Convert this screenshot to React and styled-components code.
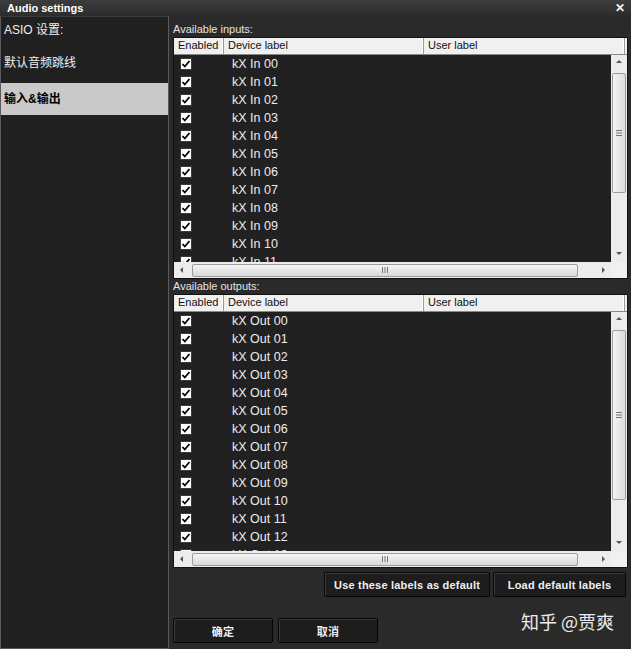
import React from "react"
import styled, { createGlobalStyle } from "styled-components"

const GlobalStyle = createGlobalStyle`
  html, body { margin: 0; padding: 0; background: #2a2a2a; }
  body { font-family: "Liberation Sans", Arial, "Noto Sans CJK SC", sans-serif; }
`

const Window = styled.div`
  width: 631px;
  height: 649px;
  display: flex;
  flex-direction: column;
  background: #2a2a2a;
  overflow: hidden;
`

const TitleBar = styled.div`
  height: 16px;
  flex: none;
  display: flex;
  align-items: center;
  justify-content: space-between;
  padding: 0 6px 0 7px;
  background: linear-gradient(#3d3d3d, #2c2c2c);
  color: #fff;
  font-size: 11px;
  font-weight: bold;
`

const Close = styled.span`
  font-size: 12px;
  font-weight: bold;
  color: #f2f2f2;
`

const Body = styled.div`
  flex: 1;
  display: flex;
  min-height: 0;
`

const Sidebar = styled.div`
  width: 167px;
  flex: none;
  background: #202020;
  border-left: 1px solid #5a5a5a;
  border-right: 1px solid #5a5a5a;
  border-bottom: 1px solid #5a5a5a;
  border-top: 1px solid #3a3a3a;
  display: flex;
  flex-direction: column;
  padding-top: 5px;
`

const NavItem = styled.div`
  height: ${(p) => (p.$active ? 32 : 33)}px;
  margin-top: ${(p) => (p.$active ? -5 : 0)}px;
  padding: 0 3px;
  display: flex;
  align-items: ${(p) => (p.$active ? "center" : "flex-start")};
  line-height: 16px;
  font-family: "Liberation Sans", "Noto Sans CJK SC", sans-serif;
  font-size: 12px;
  font-weight: ${(p) => (p.$active ? "bold" : "normal")};
  color: ${(p) => (p.$active ? "#000" : "#eee")};
  background: ${(p) => (p.$active ? "#c9c9c9" : "transparent")};
`

const Main = styled.div`
  flex: 1;
  display: flex;
  flex-direction: column;
  padding: 6px 5px 0 4px;
`

const SectionLabel = styled.div`
  font-size: 11px;
  color: #e4e4e4;
  height: 14px;
  line-height: 14px;
  margin-bottom: 1px;
`

const Table = styled.div`
  width: 453px;
  display: flex;
  flex-direction: column;
  border: 1px solid #111;
  background: #f0f0f0;
`

const HeaderRow = styled.div`
  display: flex;
  height: 16px;
  background: #f0f0f0;
  border-bottom: 1px solid #888;
`

const HeaderCell = styled.div`
  width: ${(p) => p.$w}px;
  flex: none;
  font-size: 11px;
  line-height: 15px;
  color: #111;
  padding-left: 4px;
  box-sizing: border-box;
  border-right: 1px solid #9a9a9a;
  box-shadow: inset -1px 0 0 #fff;
`

const ListArea = styled.div`
  display: flex;
  height: ${(p) => p.$h}px;
`

const List = styled.div`
  flex: 1;
  background: #212121;
  overflow: hidden;
`

const Row = styled.div`
  height: 18px;
  display: flex;
  align-items: center;
`

const CheckCell = styled.div`
  width: 52px;
  padding-left: 6px;
  display: flex;
  align-items: center;
`

const DeviceText = styled.div`
  font-size: 12.5px;
  color: #ececec;
`

const VScroll = styled.div`
  width: 16px;
  flex: none;
  background: #ececec;
  display: flex;
  flex-direction: column;
  align-items: center;
`

const Arrow = styled.div`
  width: 16px;
  height: 16px;
  flex: none;
  display: flex;
  align-items: center;
  justify-content: center;
`

const VThumbWrap = styled.div`
  flex: 1;
  width: 16px;
  display: flex;
  flex-direction: column;
  padding-top: 2px;
`

const VThumb = styled.div`
  height: ${(p) => p.$h}px;
  margin: 0 1px;
  border: 1px solid #9c9c9c;
  border-radius: 2px;
  background: linear-gradient(90deg, #f4f4f4, #dcdcdc);
  display: flex;
  align-items: center;
  justify-content: center;
`

const HScroll = styled.div`
  height: 16px;
  display: flex;
  background: #ececec;
`

const HTrack = styled.div`
  flex: 1;
  display: flex;
  align-items: center;
`

const HThumb = styled.div`
  height: 13px;
  width: 386px;
  margin-left: 2px;
  border: 1px solid #9c9c9c;
  border-radius: 2px;
  background: linear-gradient(#f6f6f6, #d8d8d8);
  display: flex;
  align-items: center;
  justify-content: center;
  box-sizing: border-box;
`

const Corner = styled.div`
  width: 16px;
  background: #f0f0f0;
`

const Spacer = styled.div`
  height: ${(p) => p.$h}px;
  flex: none;
`

const ButtonRow = styled.div`
  display: flex;
  justify-content: ${(p) => p.$justify || "flex-start"};
  align-items: center;
  gap: ${(p) => p.$gap || 3}px;
  padding-right: ${(p) => p.$pr || 0}px;
`

const Button = styled.button`
  width: ${(p) => p.$w}px;
  height: 25px;
  background: #1d1d1d;
  border: 1px solid #050505;
  border-radius: 2px;
  box-shadow: inset 1px 1px 0 #3c3c3c;
  color: #f0f0f0;
  font-family: "Liberation Sans", "Noto Sans CJK SC", sans-serif;
  font-size: 11px;
  font-weight: bold;
  letter-spacing: 0.2px;
  padding: 0;
`

const BottomBar = styled.div`
  display: flex;
  align-items: center;
  justify-content: space-between;
  padding-right: 14px;
`

const Watermark = styled.div`
  font-family: "Noto Sans CJK SC", sans-serif;
  font-size: 18px;
  color: #ececec;
  margin-top: -20px;
`

const Check = () => (
  <svg width="12" height="12" viewBox="0 0 12 12">
    <rect x="0.5" y="0.5" width="11" height="11" fill="#fff" stroke="#3a3a3a" />
    <path d="M2.5 6 L4.8 8.5 L9.5 3" fill="none" stroke="#000" strokeWidth="1.8" />
  </svg>
)

const Tri = ({ dir }) => {
  const pts = {
    up: "4,7 7,4 10,7",
    down: "4,5 7,8 10,5",
    left: "8,4 5,7 8,10",
    right: "6,4 9,7 6,10",
  }[dir]
  return (
    <svg width="14" height="14" viewBox="0 0 14 14">
      <polygon points={pts} fill="#555" />
    </svg>
  )
}

const Grip = ({ vertical }) =>
  vertical ? (
    <svg width="8" height="8" viewBox="0 0 8 8">
      <path d="M1 1.5H7M1 4H7M1 6.5H7" stroke="#777" strokeWidth="1" />
    </svg>
  ) : (
    <svg width="8" height="8" viewBox="0 0 8 8">
      <path d="M1.5 1V7M4 1V7M6.5 1V7" stroke="#777" strokeWidth="1" />
    </svg>
  )

const DeviceTable = ({ names, listHeight, thumbHeight }) => (
  <Table>
    <HeaderRow>
      <HeaderCell $w={50}>Enabled</HeaderCell>
      <HeaderCell $w={200}>Device label</HeaderCell>
      <HeaderCell $w={201}>User label</HeaderCell>
    </HeaderRow>
    <ListArea $h={listHeight}>
      <List>
        {names.map((n) => (
          <Row key={n}>
            <CheckCell>
              <Check />
            </CheckCell>
            <DeviceText>{n}</DeviceText>
          </Row>
        ))}
      </List>
      <VScroll>
        <Arrow>
          <Tri dir="up" />
        </Arrow>
        <VThumbWrap>
          <VThumb $h={thumbHeight}>
            <Grip vertical />
          </VThumb>
        </VThumbWrap>
        <Arrow>
          <Tri dir="down" />
        </Arrow>
      </VScroll>
    </ListArea>
    <HScroll>
      <Arrow>
        <Tri dir="left" />
      </Arrow>
      <HTrack>
        <HThumb>
          <Grip />
        </HThumb>
      </HTrack>
      <Arrow>
        <Tri dir="right" />
      </Arrow>
      <Corner />
    </HScroll>
  </Table>
)

const pad = (i) => String(i).padStart(2, "0")
const inputs = Array.from({ length: 12 }, (_, i) => `kX In ${pad(i)}`)
const outputs = Array.from({ length: 14 }, (_, i) => `kX Out ${pad(i)}`)

export default function App() {
  return (
    <Window>
      <GlobalStyle />
      <TitleBar>
        <span>Audio settings</span>
        <Close>✕</Close>
      </TitleBar>
      <Body>
        <Sidebar>
          <NavItem>ASIO 设置:</NavItem>
          <NavItem>默认音频跳线</NavItem>
          <NavItem $active>输入&amp;输出</NavItem>
        </Sidebar>
        <Main>
          <SectionLabel>Available inputs:</SectionLabel>
          <DeviceTable names={inputs} listHeight={207} thumbHeight={118} />
          <SectionLabel>Available outputs:</SectionLabel>
          <DeviceTable names={outputs} listHeight={239} thumbHeight={168} />
          <Spacer $h={4} />
          <ButtonRow $justify="flex-end" $pr={2}>
            <Button $w={166}>Use these labels as default</Button>
            <Button $w={133}>Load default labels</Button>
          </ButtonRow>
          <Spacer $h={21} />
          <BottomBar>
            <ButtonRow $gap={5}>
              <Button $w={100}>确定</Button>
              <Button $w={100}>取消</Button>
            </ButtonRow>
            <Watermark>知乎 @贾爽</Watermark>
          </BottomBar>
        </Main>
      </Body>
    </Window>
  )
}
